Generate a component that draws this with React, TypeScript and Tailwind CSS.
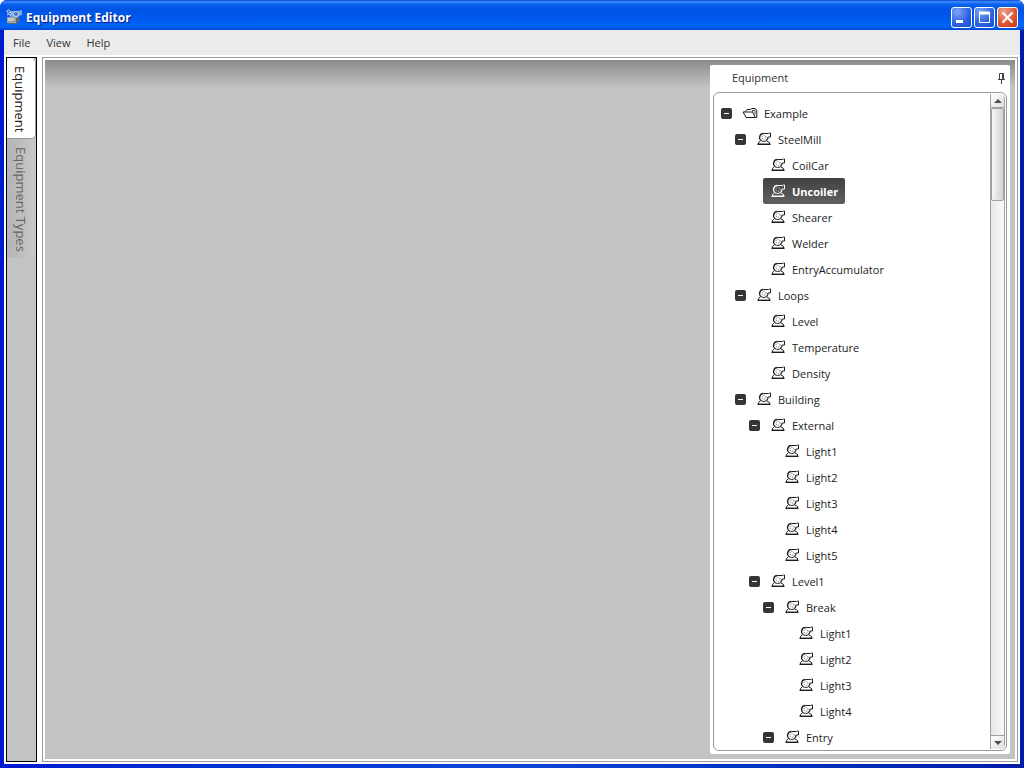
import { useState } from "react";

type TreeNode = { name: string; folder?: boolean; children?: TreeNode[] };

const lights = (n: number): TreeNode[] =>
  Array.from({ length: n }, (_, i) => ({ name: `Light${i + 1}` }));

const tree: TreeNode = {
  name: "Example",
  folder: true,
  children: [
    {
      name: "SteelMill",
      children: [
        { name: "CoilCar" },
        { name: "Uncoiler" },
        { name: "Shearer" },
        { name: "Welder" },
        { name: "EntryAccumulator" },
      ],
    },
    { name: "Loops", children: [{ name: "Level" }, { name: "Temperature" }, { name: "Density" }] },
    {
      name: "Building",
      children: [
        { name: "External", children: lights(5) },
        {
          name: "Level1",
          children: [
            { name: "Break", children: lights(4) },
            { name: "Entry", children: [] },
          ],
        },
      ],
    },
  ],
};

function PumpIcon() {
  return (
    <svg width="14" height="14" viewBox="0 0 14 14" fill="none" stroke="currentColor" className="shrink-0">
      <path d="M6.500 1.500h5l1-.5h1v4h-2.300" />
      <path d="M6.500 1.500a4 4 0 0 0-2.300 7.200" strokeWidth="1.300" />
      <path d="M11 5a4.300 4.300 0 0 1-1.700 3.800" strokeWidth="1.200" />
      <circle cx="7" cy="5.300" r="2" strokeWidth=".6" strokeDasharray="1 1" />
      <path d="M4 8.700c1.800 1 3.800 1 5.500 0" />
      <path d="M3.200 9l-1.700 1.500v1.500M10 9l2.500 1.500v1.500" />
      <path d="M.500 12.300h13" strokeWidth="1.400" />
    </svg>
  );
}

function FolderIcon() {
  return (
    <svg width="16" height="12" viewBox="0 0 16 12" fill="none" stroke="currentColor" className="-mr-px -ml-px shrink-0">
      <path d="M4 10.500L1 5h9.500l3 5.500z" />
      <path d="M3 4.800l2-2.300h3.500l1.500-1h3l1.800 1.500v7.500h-1" />
      <path d="M10.500 5v-1.500h2.500v4" strokeWidth=".8" />
    </svg>
  );
}

function AppIcon() {
  return (
    <svg width="16" height="16" viewBox="0 0 16 16" className="shrink-0">
      <path d="M5 2h7l4-1v5l-3 1-2 3H6L4 7z" fill="#7fa9dc" />
      <circle cx="10" cy="5" r="2.500" fill="#3c78c4" stroke="#c4d9ef" />
      <circle cx="2.500" cy="2.500" r="1.500" fill="none" stroke="#dfe8f3" />
      <path d="M1 6l2-1 2 2M4 3l2 2" fill="none" stroke="#dde7f2" />
      <path d="M1 8h9v6H1z" fill="#9aa0a8" />
      <path d="M2 9h6v3H2z" fill="#c9c8c3" />
      <path d="M10 9l3-1 1 4-4 3H2v-1h8z" fill="#5d6875" />
    </svg>
  );
}

function Node({
  node,
  depth,
  selected,
  onSelect,
}: {
  node: TreeNode;
  depth: number;
  selected: string;
  onSelect: (name: string) => void;
}) {
  const [open, setOpen] = useState(true);
  const active = selected === node.name;
  return (
    <li>
      <div className="flex h-[26px] items-center gap-[3px]" style={{ paddingLeft: 7 + depth * 14 }}>
        {node.children ? (
          <button
            aria-label={`Toggle ${node.name}`}
            aria-expanded={open}
            onClick={() => setOpen(!open)}
            className="flex size-[11px] shrink-0 items-center justify-center rounded-[2px] bg-[#353535]"
          >
            <svg width="11" height="11" viewBox="0 0 11 11" stroke="#fff">
              <path d="M3 5.500h5" />
              {!open && <path d="M5.500 3v5" />}
            </svg>
          </button>
        ) : (
          <span className="w-[11px] shrink-0" />
        )}
        <button
          onClick={() => onSelect(node.name)}
          className={`flex h-full items-center gap-[7px] rounded-[2px] pr-[7px] pl-2 ${
            active ? "bg-linear-to-b from-[#414141] to-[#606060] font-bold text-white" : "text-[#1c1c1c]"
          }`}
        >
          {node.folder ? <FolderIcon /> : <PumpIcon />}
          <span className="pt-0.5">{node.name}</span>
        </button>
      </div>
      {open && node.children && (
        <ul>
          {node.children.map((c) => (
            <Node key={c.name} node={c} depth={depth + 1} selected={selected} onSelect={onSelect} />
          ))}
        </ul>
      )}
    </li>
  );
}

function ScrollBar() {
  return (
    <div className="flex w-[15px] shrink-0 flex-col rounded-r-[5px] border-x border-[#a0a0a0] bg-linear-to-r from-[#e6e6e6] to-[#fafafa]">
      <button aria-label="Scroll up" className="flex h-[14px] items-center justify-center rounded-tr-[4px] border-b border-[#a0a0a0] bg-linear-to-br from-white to-[#dedede]">
        <svg width="8" height="4" viewBox="0 0 8 4" fill="#505050"><path d="M0 4L4 0l4 4z" /></svg>
      </button>
      <div className="h-[93px] rounded-[2px] border border-[#a0a0a0] bg-linear-to-r from-[#f6f6f6] to-[#d2d2d2]" />
      <button aria-label="Scroll down" className="mt-auto flex h-[14px] items-center justify-center rounded-br-[4px] border-t border-[#a0a0a0] bg-linear-to-br from-white to-[#dedede]">
        <svg width="8" height="4" viewBox="0 0 8 4" fill="#505050"><path d="M0 0l4 4 4-4z" /></svg>
      </button>
    </div>
  );
}

const tabs = ["Equipment", "Equipment Types"];

export default function App() {
  const [selected, setSelected] = useState("Uncoiler");
  const [tab, setTab] = useState(tabs[0]);
  const winBtn = "flex size-[21px] items-center justify-center rounded-[3px] border border-white";
  return (
    <div className="flex h-screen flex-col overflow-hidden rounded-t-[7px] bg-linear-to-r from-[#0019cf] via-[#0c46d8] to-[#001ba8] font-['Open_Sans','Noto_Sans',sans-serif] text-[11px] text-[#333]">
      <header className="flex h-[30px] shrink-0 items-center gap-1 bg-[linear-gradient(#0a46c8_0%,#3c8cff_6%,#0a62ee_14%,#0054e3_30%,#0058ee_60%,#0066ff_88%,#0048cf_100%)] px-[6px] pt-1">
        <AppIcon />
        <h1 className="flex-1 pt-0.5 text-[12px] font-bold text-white [text-shadow:1px_1px_1px_#0a1883]">
          Equipment Editor
        </h1>
        <div className="flex gap-[2px]">
          <button aria-label="Minimize" className={`${winBtn} bg-[radial-gradient(circle_at_30%_20%,#7da4f5,#2a60e0_60%,#1c4ed2)]`}>
            <svg width="19" height="19" viewBox="0 0 19 19"><path d="M4 12h7v3H4z" fill="#fff" /></svg>
          </button>
          <button aria-label="Maximize" className={`${winBtn} bg-[radial-gradient(circle_at_30%_20%,#7da4f5,#2a60e0_60%,#1c4ed2)]`}>
            <svg width="19" height="19" viewBox="0 0 19 19" fill="none" stroke="#fff">
              <path d="M4.500 4.500h10v10h-10z" />
              <path d="M4 5h11" strokeWidth="3" />
            </svg>
          </button>
          <button aria-label="Close" className={`${winBtn} bg-[radial-gradient(circle_at_30%_20%,#f0a088,#dd5230_60%,#c63c17)]`}>
            <svg width="19" height="19" viewBox="0 0 19 19" stroke="#fff" strokeWidth="2.200"><path d="M4.500 4.500l10 10M14.500 4.500l-10 10" /></svg>
          </button>
        </div>
      </header>

      <div className="mx-1 mb-1 flex min-h-0 flex-1 flex-col bg-white">
        <nav className="flex h-[25px] shrink-0 items-center gap-4 bg-[#ebebeb] px-[9px] pt-0.5">
          <button>File</button>
          <button>View</button>
          <button>Help</button>
        </nav>

        <div className="flex min-h-0 flex-1 gap-[5px] p-[2px]">
          <div role="tablist" className="flex w-[31px] shrink-0 flex-col border border-black bg-[#c3c3c3]">
            {tabs.map((t) => (
              <button
                key={t}
                role="tab"
                aria-selected={t === tab}
                onClick={() => setTab(t)}
                className={`flex items-center justify-start rounded-r-[5px] pt-2 pr-0.5 pb-[6px] text-[13px] leading-5 [writing-mode:vertical-rl] ${
                  t === tab
                    ? "border-r border-b border-[#999] bg-white text-[#222]"
                    : "bg-linear-to-r from-[#b4b4b4] to-[#c8c8c8] text-[#666]"
                }`}
              >
                {t}
              </button>
            ))}
          </div>

          <div className="flex min-w-0 flex-1 border border-[#999] p-[2px]">
            <main className="flex min-w-0 flex-1 justify-end bg-[#c3c3c3] bg-[linear-gradient(#8a8c8a,#c3c3c3_28px)] p-[5px]">
              <section className="flex w-[300px] flex-col rounded-[2px] bg-white px-[3px] pb-[3px]">
                <div className="flex h-[27px] shrink-0 items-center justify-between pr-px pl-[19px]">
                  <h2>Equipment</h2>
                  <button aria-label="Auto hide" className="pb-0.5">
                    <svg width="9" height="12" viewBox="0 0 9 12" fill="none" stroke="#444">
                      <path d="M2.500 7V1.500h4V7M1 7.500h7M4.500 8v4" />
                      <path d="M5.500 2v5" />
                    </svg>
                  </button>
                </div>
                <div className="flex min-h-0 flex-1 overflow-hidden rounded-[6px] border border-[#999] py-px pr-px">
                  <ul className="min-w-0 flex-1 overflow-hidden pt-[6px]">
                    <Node node={tree} depth={0} selected={selected} onSelect={setSelected} />
                  </ul>
                  <ScrollBar />
                </div>
              </section>
            </main>
          </div>
        </div>
      </div>
    </div>
  );
}
